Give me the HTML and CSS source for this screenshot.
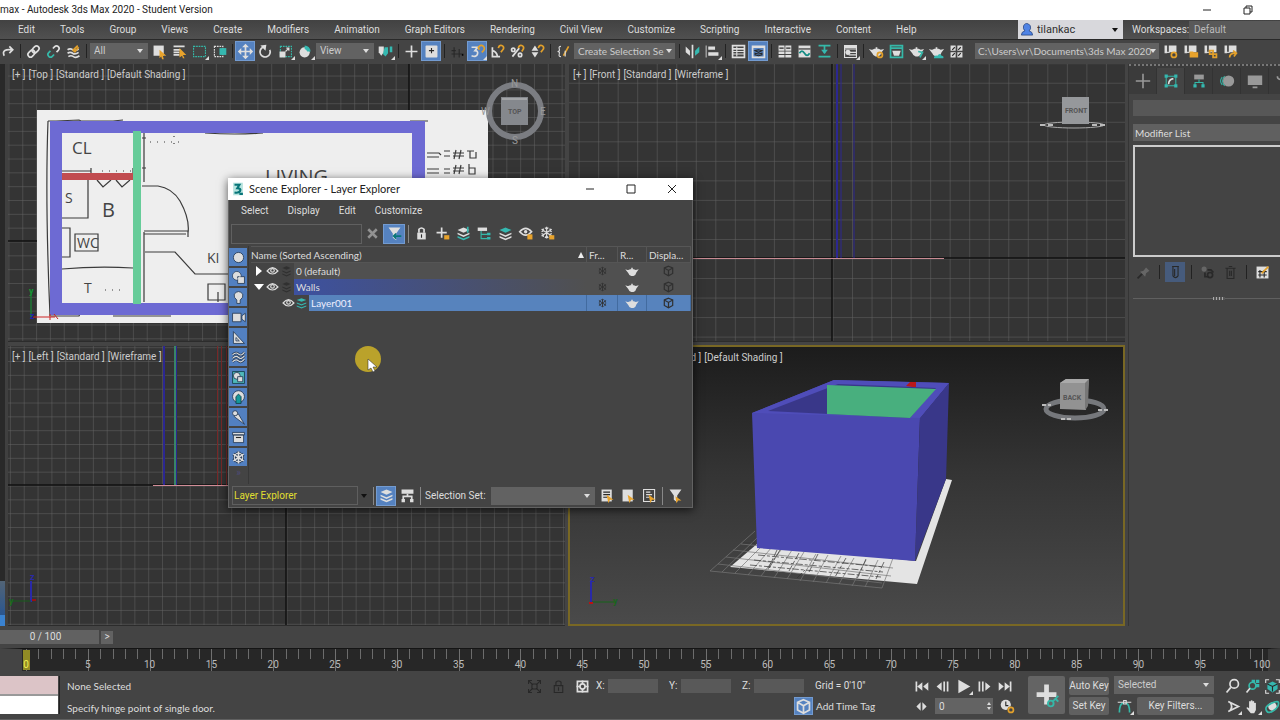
FILE: index.html
```html
<!DOCTYPE html>
<html lang="en">
<head>
<meta charset="utf-8">
<title>Autodesk 3ds Max 2020 - Student Version</title>
<link rel="stylesheet" href="styles.css">
</head>
<body>
<svg class="sprite" aria-hidden="true">
  <symbol id="redo" viewBox="0 0 20 20"><path class="s2" d="M5 15C2 9 7 7 14 8M11 4l4 4-4 4"/></symbol>
  <symbol id="link" viewBox="0 0 20 20"><g class="s2" transform="rotate(-45 10 10)"><rect x="2" y="7" width="9" height="6" rx="3"/><rect x="9" y="7" width="9" height="6" rx="3"/></g></symbol>
  <symbol id="unlink" viewBox="0 0 20 20"><g transform="rotate(-45 10 10)"><path class="t2" d="M8 7H5a3 3 0 0 0 0 6h3"/><path class="s2" d="M12 7h3a3 3 0 0 1 0 6h-3"/></g></symbol>
  <symbol id="bind" viewBox="0 0 20 20"><path class="s2" d="M3 8q3-2 6 0t7-1M3 12q3-2 6 0t7-1M4 16q3-2 6 0t7-1"/><path class="y2" d="M9 9l6-6M11 11l5-6M9 9h4"/></symbol>
  <symbol id="select" viewBox="0 0 20 20"><path class="f" d="M3 3h12v12H3z"/><path class="fy" d="M10 8l8 7-4 0 1 4-2 0-1-3-2 2z"/></symbol>
  <symbol id="byname" viewBox="0 0 20 20"><path class="s2" d="M3 4h13M3 8h8M3 11h7M3 14h7"/><path class="fy" d="M10 6l8 8-4 0 2 4-2 0-1-3-3 2z"/></symbol>
  <symbol id="region" viewBox="0 0 20 20"><path class="t1" stroke-dasharray="2 1" d="M3 4h14v12H3z"/></symbol>
  <symbol id="window" viewBox="0 0 20 20"><path class="s1" stroke-dasharray="2 1" d="M4 4h10v12H4z"/><path class="ft" d="M10 6h8v8h-8z"/></symbol>
  <symbol id="move" viewBox="0 0 20 20"><path class="s2" d="M10 3v14M3 10h14"/><path class="f" d="M10 1l4 4H6zM10 19l4-4H6zM1 10l4-4v8zM19 10l-4-4v8z"/></symbol>
  <symbol id="rotate" viewBox="0 0 20 20"><path class="s2" d="M7 5a6 6 0 1 0 8 3"/><path class="f" d="M4 3l7-1-1 7z"/></symbol>
  <symbol id="scale" viewBox="0 0 20 20"><path class="t1" stroke-dasharray="2 1" d="M4 4h13v12H4z"/><path class="f" d="M3 10h7v7H3z"/><path class="s1" d="M10 10l4-4M11 6h3v3"/></symbol>
  <symbol id="place" viewBox="0 0 20 20"><circle class="f" cx="9" cy="11" r="6"/><path class="ft" d="M9 3a7 7 0 0 1 7 7l-4 0a4 4 0 0 0-3-3z"/></symbol>
  <symbol id="pivot" viewBox="0 0 20 20"><path class="f" d="M2 4h6v7l-3 4-3-4z"/><path class="ft" d="M9 5h4v7l-3 4-3-3zM15 4h3v7h-3z"/></symbol>
  <symbol id="manip" viewBox="0 0 20 20"><path class="s2" d="M10 3v14M3 10h14"/></symbol>
  <symbol id="keyb" viewBox="0 0 20 20"><rect class="f" x="3" y="3" width="14" height="14" rx="1"/><path class="k1" d="M10 6v6M7 9h6"/></symbol>
  <symbol id="snap2" viewBox="0 0 20 20"><path class="k1" d="M3 13h14M6 5v12M12 7v10M3 9h5"/><circle cx="16" cy="14" r="1"/></symbol>
  <symbol id="snap3" viewBox="0 0 20 20"><path class="s2" d="M3 5h7L7 9q4 0 3 4t-7 2"/><path class="y2" d="M12 8l-1-3q3-4 6-1t-2 7"/></symbol>
  <symbol id="snapa" viewBox="0 0 20 20"><path class="s2" d="M4 5v11h9M4 9q5 1 6 7"/><path class="y2" d="M11 6q1-4 4-3t2 4l-3 4"/></symbol>
  <symbol id="snapp" viewBox="0 0 20 20"><path class="s2" d="M12 6L4 16"/><circle class="s2" cx="5" cy="8" r="2"/><circle class="s2" cx="13" cy="14" r="2"/><path class="y2" d="M11 6q1-4 4-3t2 4l-2 3"/></symbol>
  <symbol id="snaps" viewBox="0 0 20 20"><path class="f" d="M7 3l4 6H3zM7 17l4-6H3z"/><path class="y2" d="M11 6q1-4 4-3t2 4l-3 4"/></symbol>
  <symbol id="sets" viewBox="0 0 20 20"><path class="s1" d="M7 4q-3 0-2 3t-2 3q3 0 2 3t2 3"/><path class="y2" d="M10 15l6-11"/><path class="s1" d="M12 9v7"/></symbol>
  <symbol id="mirror" viewBox="0 0 20 20"><path class="f" d="M2 4l5 5v6l-5-4zM9 2h2v16H9z"/><path class="ft" d="M18 4l-5 5v6l5-4z"/></symbol>
  <symbol id="align" viewBox="0 0 20 20"><path class="f" d="M2 3h1v14H2zM5 4h8v4H5zM5 11h12v4H5z"/></symbol>
  <symbol id="list" viewBox="0 0 20 20"><path class="s2" d="M3 3h14v14H3zM3 7h14"/><path class="s1" d="M3 10h14M3 13h14M8 4v12"/></symbol>
  <symbol id="layerx" viewBox="0 0 20 20"><path class="s2" d="M3 4h14v13H3zM3 5h14"/><path class="k1" fill="#282828" d="M6 9l4-1 4 1-4 2zM6 12l4 1 4-1v2l-4 1-4-1z"/></symbol>
  <symbol id="ribbon" viewBox="0 0 20 20"><path class="f" d="M3 3h7v6H3zM11 3h7v6h-7zM3 10h7v3H3zM11 10h7v3h-7zM3 14h7v3H3zM11 14h7v3h-7z"/><path class="k1" d="M4 6h5M12 6h5"/></symbol>
  <symbol id="curve" viewBox="0 0 20 20"><path class="f" d="M3 3h14v14H3z"/><path class="k1" d="M3 7h14"/><path stroke="#138b83" stroke-width="2" fill="none" d="M4 12q3-5 6 0t6 0"/></symbol>
  <symbol id="schem" viewBox="0 0 20 20"><path class="t2" d="M3 3h14M3 16h14M10 4v8"/><path class="ft" d="M6 8h8l-4 5z"/></symbol>
  <symbol id="mat" viewBox="0 0 20 20"><path class="s1" d="M3 3h14v14H3zM3 7h14M8 11h9M8 14h9"/><path class="f" d="M3 3h14v3H3z"/><circle class="f" cx="7" cy="11" r="3"/></symbol>
  <symbol id="tea" viewBox="0 0 20 20"><path class="f" d="M5 8q5-3 10 0l4-1-3 4q-1 4-4 5H9Q6 15 5 12L1 7l3 1zM9 5h2v2H9z"/></symbol>
  <symbol id="rset" viewBox="0 0 20 20"><use href="#tea"/><circle class="y2" cx="14" cy="14" r="3"/></symbol>
  <symbol id="rwin" viewBox="0 0 20 20"><path class="t2" d="M3 3h14v14H3zM3 6h14"/><path class="f" d="M5 9h10l-2 6H7z"/></symbol>
  <symbol id="rprod" viewBox="0 0 20 20"><use href="#tea"/><path class="t2" d="M12 10l5 1-3 6"/></symbol>
  <symbol id="rcloud" viewBox="0 0 20 20"><use href="#tea"/><path class="ft" d="M7 18q0-4 4-3 3-4 5 0 3 0 2 3z"/></symbol>
  <symbol id="rgal" viewBox="0 0 20 20"><path class="f" d="M3 3h6v6H3zM11 3h6v6h-6zM3 11h6v6H3zM11 11h6v6h-6z"/><path class="k1" d="M5 8l3-3M12 8l3-3M5 15l3-3M12 15l3-3"/></symbol>
  <symbol id="proj" viewBox="0 0 20 20"><path class="f" d="M3 3h3v9H3zM8 3h9v8H8z"/><path class="s1" d="M4 11h5"/></symbol>
  <symbol id="p1" viewBox="0 0 20 20"><use href="#proj"/><circle class="y2" cx="14" cy="14" r="3"/></symbol>
  <symbol id="p2" viewBox="0 0 20 20"><use href="#proj"/><path class="fy" d="M9 10h4l1 1h5v6H9z"/></symbol>
  <symbol id="p3" viewBox="0 0 20 20"><use href="#proj"/><path class="y2" d="M9 9h4v4H9zM13 13h4v4h-4z"/></symbol>
  <symbol id="p4" viewBox="0 0 20 20"><use href="#proj"/><path class="y2" d="M9 17q0-5 7-5M13 9l4 3-3 4"/></symbol>
  <symbol id="plus" viewBox="0 0 20 20"><path class="g2" d="M10 1v18M1 10h18"/></symbol>
  <symbol id="modify" viewBox="0 0 20 20"><path class="t1" d="M4 4h12v12H4z"/><path class="ft" d="M2 2h4v4H2zM14 2h4v4h-4zM2 14h4v4H2zM14 14h4v4h-4z"/><path class="s2" d="M7 14q0-6 6-7"/></symbol>
  <symbol id="hier" viewBox="0 0 20 20"><path class="g" d="M4 2h12v6H4z"/><path class="t1" d="M10 8v4M5 16v-4h10v4"/><path class="ft" d="M3 14h4v4H3zM13 14h4v4h-4z"/></symbol>
  <symbol id="motion" viewBox="0 0 20 20"><path class="t1" d="M7 4q-5 6 0 12M4 5q-4 5 0 10"/><circle class="g" cx="12" cy="10" r="7"/></symbol>
  <symbol id="display" viewBox="0 0 20 20"><path class="g" d="M1 3h18v12H1zM7 17h6v2H7z"/></symbol>
  <symbol id="util" viewBox="0 0 20 20"><path class="g2" d="M3 4q0 4 4 4l9 9M7 3l1 4"/></symbol>
  <symbol id="pin" viewBox="0 0 20 20"><path class="d2" d="M3 17l6-6"/><path class="d" d="M6 9l4-1 3-4 4 4-4 3-1 4z"/></symbol>
  <symbol id="tube" viewBox="0 0 20 20"><path class="k1" d="M6 3h8M7 3v11q3 4 6 0V3M9 6v8"/></symbol>
  <symbol id="unique" viewBox="0 0 20 20"><circle class="d" cx="6" cy="6" r="3"/><path class="d2" d="M10 7h4l3 3M7 10v5h4"/><circle class="d2" cx="13" cy="13" r="3"/></symbol>
  <symbol id="trash" viewBox="0 0 20 20"><path class="d1" d="M4 5h12M6 5v12h8V5M8 3h4M9 8v6M11 8v6"/></symbol>
  <symbol id="config" viewBox="0 0 20 20"><path class="f" d="M3 3h14v14H3z"/><path class="k1" d="M5 9h10M5 13h10M7 7v9M12 7v9"/><path class="y2" d="M9 11l8-8"/></symbol>
  <symbol id="max" viewBox="0 0 20 20"><path fill="#b8e4df" d="M3 1h14v18H3z"/><path stroke="#087579" stroke-width="3" fill="none" d="M5 4h7l-3 5q6 0 4 4-2 3-8 2M12 17h5"/></symbol>
  <symbol id="filter" viewBox="0 0 20 20"><path class="f" d="M3 3h14l-5 7v8l-4-3v-5z"/></symbol>
  <symbol id="filtera" viewBox="0 0 20 20"><use href="#filter"/><path stroke="#087579" stroke-width="2" fill="none" d="M9 13h9M12 10l-3 3 3 3"/></symbol>
  <symbol id="filterb" viewBox="0 0 20 20"><use href="#filter"/><path class="fy" d="M10 11l7 5h-4l-2 3z"/></symbol>
  <symbol id="lock" viewBox="0 0 20 20"><path class="f" d="M5 9h10v8H5z"/><path class="s2" d="M7 9V5q3-3 6 0v4"/><path class="k1" d="M10 11v4"/></symbol>
  <symbol id="lockd" viewBox="0 0 20 20"><path class="k1" d="M5 9h10v8H5zM7 9V5q3-3 6 0v4M10 11v4"/></symbol>
  <symbol id="addl" viewBox="0 0 20 20"><path class="s2" d="M9 3v12M3 9h12"/><path class="fy" d="M12 12h6v5h-6z"/></symbol>
  <symbol id="layers" viewBox="0 0 20 20"><path class="f" d="M3 6l7-3 7 3-7 3zM3 9l7 3 7-3v2l-7 3-7-3zM3 13l7 3 7-3v2l-7 3-7-3z"/></symbol>
  <symbol id="layadd" viewBox="0 0 20 20"><path class="f" d="M3 6l7-3 7 3-7 3z"/><path class="ft" d="M3 13l7 3 7-3v2l-7 3-7-3zM14 2h2v7h-2z"/><path class="f" d="M3 9l7 3 7-3v2l-7 3-7-3z"/></symbol>
  <symbol id="layt" viewBox="0 0 20 20"><path class="ft" d="M3 6l7-3 7 3-7 3z"/><path class="f" d="M3 9l7 3 7-3v2l-7 3-7-3zM3 13l7 3 7-3v2l-7 3-7-3z"/></symbol>
  <symbol id="layall" viewBox="0 0 20 20"><path class="ft" d="M2 5l8-3 8 3-8 3zM2 9l8 3 8-3v2l-8 3-8-3zM2 14l8 3 8-3v2l-8 3-8-3z"/></symbol>
  <symbol id="laydim" viewBox="0 0 20 20"><path fill="#303030" d="M3 5l7-3 7 3-7 3zM3 9l7 3 7-3v2l-7 3-7-3zM3 14l7 3 7-3v2l-7 3-7-3z"/></symbol>
  <symbol id="tree" viewBox="0 0 20 20"><path class="f" d="M2 3h11v4H2z"/><path class="t1" d="M6 7v9h7M6 11h7"/><path class="ft" d="M13 9h4v3h-4zM13 14h4v3h-4z"/></symbol>
  <symbol id="eye" viewBox="0 0 20 20"><path class="s2" d="M1 10q9-11 18 0-9 10-18 0z"/><circle class="s2" cx="10" cy="9" r="3"/></symbol>
  <symbol id="eyel" viewBox="0 0 20 20"><path class="s2" d="M2 8q7-8 14 0-7 8-14 0z"/><circle class="f" cx="9" cy="8" r="2"/><path class="fy" d="M11 11h6v6h-6z"/></symbol>
  <symbol id="snow" viewBox="0 0 20 20"><path d="M10 3v14M4 6l12 8M16 6L4 14M8 4l2 2 2-2M8 16l2-2 2 2M4 9l2-1V5M16 9l-2-1V5M4 11l2 1v3M16 11l-2 1v3" fill="none" stroke="currentColor" stroke-width="1.4"/></symbol>
  <symbol id="snowl" viewBox="0 0 20 20"><use href="#snow" x="-1" y="-1"/><path class="fy" d="M12 12h6v5h-6z"/></symbol>
  <symbol id="cube" viewBox="0 0 20 20"><path d="M10 2l7 3v9l-7 4-7-4V5zM3 5l7 4 7-4M10 9v9" fill="none" stroke="currentColor" stroke-width="2"/></symbol>
  <symbol id="geo" viewBox="0 0 20 20"><circle class="o" cx="10" cy="10" r="6"/></symbol>
  <symbol id="shapes" viewBox="0 0 20 20"><circle class="o" cx="8" cy="8" r="5"/><path class="o" d="M9 9h8v8H9z"/><circle cx="8" cy="8" r="4" fill="none" stroke="#ddd"/></symbol>
  <symbol id="bulb" viewBox="0 0 20 20"><path class="o" d="M8 13q-4-3-3-7 5-6 10 0 1 4-3 7v4H8z"/></symbol>
  <symbol id="cam" viewBox="0 0 20 20"><path class="o" d="M3 5h10v10H3zM14 8l4-3v10l-4-3z"/></symbol>
  <symbol id="help" viewBox="0 0 20 20"><path class="o" d="M4 3l13 14H4zM7 10l4 4H7z"/></symbol>
  <symbol id="wave" viewBox="0 0 20 20"><path class="w3" d="M3 7q4-4 7-1t7-2M3 11q4-4 7-1t7-2M3 15q4-4 7-1t7-2"/><path class="s1" d="M3 7q4-4 7-1t7-2M3 11q4-4 7-1t7-2M3 15q4-4 7-1t7-2"/></symbol>
  <symbol id="grp" viewBox="0 0 20 20"><path stroke="#143f49" fill="#4fb9b9" d="M3 3h14v14H3z"/><circle class="o" cx="8" cy="8" r="4"/><path class="o" d="M9 9h6v6H9z"/></symbol>
  <symbol id="xref" viewBox="0 0 20 20"><circle class="o" cx="10" cy="9" r="7"/><path fill="#15999a" stroke="#143f49" d="M7 17V9l3-3 3 3v8z"/></symbol>
  <symbol id="bone" viewBox="0 0 20 20"><path class="o" d="M6 7l4-1 7 12L5 9z"/><circle class="o" cx="6" cy="5" r="3"/></symbol>
  <symbol id="box" viewBox="0 0 20 20"><path class="o" d="M4 7h12v9H4zM3 4h14v3H3z"/><path class="k1" d="M7 10h6"/></symbol>
  <symbol id="frz" viewBox="0 0 20 20"><path stroke="#263b57" stroke-width="4" d="M10 3v14M4 6l12 8M16 6L4 14"/><circle class="w3" cx="10" cy="10" r="5"/><path class="s2" d="M10 3v14M4 6l12 8M16 6L4 14"/><circle class="s1" cx="10" cy="10" r="5"/></symbol>
  <symbol id="hmode" viewBox="0 0 20 20"><path class="f" d="M3 3h14v5H3zM3 14h4v4H3zM13 14h4v4h-4z"/><path class="s2" d="M5 14v-3h10v3M10 8v3"/></symbol>
  <symbol id="doc" viewBox="0 0 20 20"><path class="f" d="M3 3h12v14H3z"/><path class="k1" d="M5 6h8M5 9h8M5 12h5"/><path class="fy" d="M9 9l8 6h-4l-2 4z"/></symbol>
  <symbol id="doc2" viewBox="0 0 20 20"><path class="f" d="M3 3h12v14H3z"/><path class="fy" d="M9 9l8 6h-4l-2 4z"/></symbol>
  <symbol id="doc3" viewBox="0 0 20 20"><path class="s1" d="M3 3h13v14H3z"/><path class="s1" d="M6 6h5M6 9h7M6 12h4"/><path class="fy" d="M9 9l8 6h-4l-2 4z"/></symbol>
  <symbol id="user" viewBox="0 0 20 20"><path fill="#4f83e5" stroke="#1b3975" d="M2 18q0-5 5-6-3-3-2-7 2-5 7-3 4 2 3 7l-2 3q5 1 5 6z"/></symbol>
  <symbol id="iso" viewBox="0 0 20 20"><path class="k1" d="M3 7V3h4M13 3h4v4M3 13v4h4M13 17h4v-4M7 7h6v6H7zM3 3l5 5M17 3l-5 5M3 17l5-5M17 17l-5-5"/></symbol>
  <symbol id="abs" viewBox="0 0 20 20"><path class="s2" d="M4 4h12v12H4z"/><circle class="s2" cx="10" cy="10" r="3"/><path class="s2" d="M10 3v4M10 13v4M3 10h4M13 10h4"/></symbol>
  <symbol id="first" viewBox="0 0 20 20"><path class="f" d="M3 4h2v12H3zM11 5v10l-6-5zM18 5v10l-6-5z"/></symbol>
  <symbol id="last" viewBox="0 0 20 20"><path class="f" d="M15 4h2v12h-2zM9 5v10l6-5zM2 5v10l6-5z"/></symbol>
  <symbol id="prev" viewBox="0 0 20 20"><path class="f" d="M9 5v10l-6-5zM11 4h2v12h-2zM15 4h2v12h-2z"/></symbol>
  <symbol id="next" viewBox="0 0 20 20"><path class="f" d="M11 5v10l6-5zM7 4h2v12H7zM3 4h2v12H3z"/></symbol>
  <symbol id="play" viewBox="0 0 20 20"><path class="f" d="M4 2l14 8-14 8z"/></symbol>
  <symbol id="kmode" viewBox="0 0 20 20"><path class="f" d="M9 5v10l-5-5zM11 5v10l5-5z"/></symbol>
  <symbol id="time" viewBox="0 0 20 20"><circle class="f" cx="8" cy="8" r="6"/><path class="k1" d="M8 4v5h3"/><circle cx="14" cy="14" r="4" fill="#444"/><circle class="y2" cx="14" cy="14" r="3"/></symbol>
  <symbol id="setkey" viewBox="0 0 36 36"><path class="f" d="M15 7h5v8h8v5h-8v8h-5v-8H7v-5h8z"/><circle class="t2" cx="22" cy="27" r="3"/><path class="t2" d="M24 25l6-6M27 22l3 3"/></symbol>
  <symbol id="tang" viewBox="0 0 20 20"><path class="t2" d="M4 17q0-11 5-11M16 17q0-11-5-11"/><path class="s1" d="M2 5h16M9 3h3v4H9z"/></symbol>
  <symbol id="mag" viewBox="0 0 20 20"><circle class="s2" cx="12" cy="7" r="5"/><path class="s2" d="M8 11l-5 6"/></symbol>
  <symbol id="magall" viewBox="0 0 20 20"><path class="ft" d="M9 2h4v4H9zM14 2h4v4h-4zM14 7h4v4h-4z"/><circle class="t2" cx="10" cy="9" r="4"/><path class="s2" d="M7 12l-4 5"/></symbol>
  <symbol id="ext" viewBox="0 0 20 20"><path class="s1" d="M2 6V2h4M14 2h4v4M2 14v4h4M14 18h4v-4"/><path class="ft" d="M10 4l6 3v6l-6 4-6-4V7z"/><path class="k1" d="M4 7l6 3 6-3M10 10v6"/></symbol>
  <symbol id="fov" viewBox="0 0 20 20"><path class="s2" d="M5 4l12 6-12 6M7 5q4 5 0 10"/></symbol>
  <symbol id="hand" viewBox="0 0 20 20"><path class="f" d="M6 10V4q1-1 2 0v4-5q1-1 2 0v5-4q1-1 2 0v5-3q1-1 2 0v8l-2 4H8L3 12q0-2 3 0z"/></symbol>
  <symbol id="orbit" viewBox="0 0 20 20"><circle class="f" cx="10" cy="10" r="5"/><path class="t2" d="M3 15q-3-5 6-9t8 1q0 4-6 8t-8 0"/></symbol>
</svg>

<div class="app">
  <header class="titlebar">
    <h1>max - Autodesk 3ds Max 2020 - Student Version</h1>
    <div class="winbtns">
      <button aria-label="Minimize"><svg viewBox="0 0 12 12"><path d="M2 6h8"/></svg></button>
      <button aria-label="Restore"><svg viewBox="0 0 12 12"><path d="M2 4h6v6H2zM4 4V2h6v6H8"/></svg></button>
    </div>
  </header>

  <nav class="menubar">
    <div class="menus">
      <button>Edit</button><button>Tools</button><button>Group</button><button>Views</button><button>Create</button><button>Modifiers</button><button>Animation</button><button>Graph Editors</button><button>Rendering</button><button>Civil View</button><button>Customize</button><button>Scripting</button><button>Interactive</button><button>Content</button><button>Help</button>
    </div>
    <span class="account"><svg class="ic"><use href="#user"/></svg><select aria-label="Account"><option>tilankac</option></select></span>
    <label class="workspace"><span>Workspaces:</span><select><option>Default</option></select></label>
  </nav>

  <div class="toolbar">
    <button class="tb edge" aria-label="Redo"><svg><use href="#redo"/></svg></button><i class="sep"></i>
    <button class="tb" aria-label="Link"><svg><use href="#link"/></svg></button>
    <button class="tb" aria-label="Unlink"><svg><use href="#unlink"/></svg></button>
    <button class="tb" aria-label="Bind"><svg><use href="#bind"/></svg></button><i class="sep"></i>
    <span class="drop w-s"><select aria-label="Selection filter"><option>All</option></select></span>
    <button class="tb" aria-label="Select"><svg><use href="#select"/></svg></button>
    <button class="tb" aria-label="Select by name"><svg><use href="#byname"/></svg></button>
    <button class="tb fly" aria-label="Region"><svg><use href="#region"/></svg></button>
    <button class="tb" aria-label="Window crossing"><svg><use href="#window"/></svg></button><i class="sep"></i>
    <button class="tb on" aria-label="Move"><svg><use href="#move"/></svg></button>
    <button class="tb" aria-label="Rotate"><svg><use href="#rotate"/></svg></button>
    <button class="tb fly" aria-label="Scale"><svg><use href="#scale"/></svg></button>
    <button class="tb fly" aria-label="Place"><svg><use href="#place"/></svg></button>
    <span class="drop w-s"><select aria-label="Coordinate system"><option>View</option></select></span>
    <button class="tb fly" aria-label="Pivot"><svg><use href="#pivot"/></svg></button><i class="sep"></i>
    <button class="tb" aria-label="Manipulate"><svg><use href="#manip"/></svg></button>
    <button class="tb on" aria-label="Keyboard override"><svg><use href="#keyb"/></svg></button><i class="sep"></i>
    <button class="tb" aria-label="Grid snap"><svg><use href="#snap2"/></svg></button>
    <button class="tb on fly" aria-label="3D snap"><svg><use href="#snap3"/></svg></button>
    <button class="tb" aria-label="Angle snap"><svg><use href="#snapa"/></svg></button>
    <button class="tb" aria-label="Percent snap"><svg><use href="#snapp"/></svg></button>
    <button class="tb" aria-label="Spinner snap"><svg><use href="#snaps"/></svg></button><i class="sep"></i>
    <button class="tb" aria-label="Edit selection sets"><svg><use href="#sets"/></svg></button>
    <span class="drop w-m"><select aria-label="Selection set"><option>Create Selection Se</option></select></span><i class="sep"></i>
    <button class="tb" aria-label="Mirror"><svg><use href="#mirror"/></svg></button>
    <button class="tb fly" aria-label="Align"><svg><use href="#align"/></svg></button><i class="sep"></i>
    <button class="tb" aria-label="Scene explorer"><svg><use href="#list"/></svg></button>
    <button class="tb on" aria-label="Layer explorer"><svg><use href="#layerx"/></svg></button><i class="sep"></i>
    <button class="tb" aria-label="Ribbon"><svg><use href="#ribbon"/></svg></button>
    <button class="tb" aria-label="Curve editor"><svg><use href="#curve"/></svg></button>
    <button class="tb" aria-label="Schematic view"><svg><use href="#schem"/></svg></button><i class="sep"></i>
    <button class="tb fly" aria-label="Material editor"><svg><use href="#mat"/></svg></button><i class="sep"></i>
    <button class="tb" aria-label="Render setup"><svg><use href="#rset"/></svg></button>
    <button class="tb" aria-label="Frame window"><svg><use href="#rwin"/></svg></button>
    <button class="tb fly" aria-label="Render"><svg><use href="#rprod"/></svg></button>
    <button class="tb" aria-label="Cloud render"><svg><use href="#rcloud"/></svg></button>
    <button class="tb" aria-label="Gallery"><svg><use href="#rgal"/></svg></button><i class="grip"></i>
    <span class="drop w-l"><select aria-label="Project folder"><option>C:\Users\vr\Documents\3ds Max 2020</option></select></span>
    <button class="tb" aria-label="Project"><svg><use href="#p1"/></svg></button>
    <button class="tb" aria-label="Open folder"><svg><use href="#p2"/></svg></button>
    <button class="tb" aria-label="Project tree"><svg><use href="#p3"/></svg></button>
    <button class="tb" aria-label="Project defaults"><svg><use href="#p4"/></svg></button>
  </div>

  <main class="work">
    <div class="rail"></div>
    <div class="views">
      <section class="view">
        <svg viewBox="8 64 557 278" preserveAspectRatio="xMinYMin slice">
          <defs>
            <pattern id="gt" x="409.5" y="241.5" width="13.83" height="13.83" patternUnits="userSpaceOnUse"><path d="M0 0H14M0 0V14" class="grid"/></pattern>
          </defs>
          <path fill="url(#gt)" d="M8 64h557v278H8z"/>
          <path class="axis" d="M409 64v278M8 241h557"/>
          <path fill="#eee" d="M37 110h451v213H37z"/>
          <path class="ink" d="M48 121h8l23-1 2 1h32l10-1M48 121q-3 80 2 195M51 316h28l1-2M113 316h58M205 133q30 2 58 0M410 121h18M144 132v50M142 138h4M142 168h4M142 186h16q14 2 22 15 10 18 8 32M144 231h44v6M144 234h42M144 232v70M145 252h30l20 22h33M62 171h29v-3M91 168v6M133 168v6M97 180l6 7 8-7M116 180l6 7 8-7M88 180v38H61M62 228h8v29h-8M75 234h23v17H75zM62 269q35-3 71-1M208 284h17v16h-17zM218 292v10M427 153h12l2 2M427 157h12M427 169h12M427 173h12M444 151h6M444 156h6M456 150l-2 9M461 150l-2 9M453 153h11M453 156h11M467 151h7M470 151v7h6v-6M444 169h6M444 173h6M456 165l-2 9M461 165l-2 9M453 168h11M453 171h11M469 164v10h6v-6h-6"/>
          <path class="ink" stroke-dasharray="1 6" d="M150 142h30M174 136v11M102 171h30M105 290h20"/>
          <g class="hand"><text x="72" y="154">CL</text><text x="65" y="203" class="sm">S</text><text x="102" y="217" class="lg">B</text><text x="77" y="248" class="sm">WC</text><text x="84" y="293" class="sm">T</text><text x="207" y="263" class="sm">KI</text><text x="265" y="184" class="lg">LIVING</text></g>
          <path fill="#6d6ad3" fill-rule="evenodd" d="M50 121h375v194H50zM62 133v170h350V133z"/>
          <path fill="#c14c50" d="M62 173h72v7H62z"/><path fill="#66cc99" d="M133 131h8v173h-8z"/>
          <path stroke="#193" d="M31 294v23" /><path stroke="#c22" d="M33 317h22M50 314v6M54 314l4 5"/>
          <text class="ax" fill="#193" x="29" y="294">y</text><text class="ax" fill="#22a" x="30" y="319">z</text>
          <g><circle cx="515" cy="111" r="26" fill="none" stroke="#7b7d82" stroke-width="6"/><path fill="#85888d" d="M501 97h27v28h-27z"/><path fill="#a3a5a8" d="M502 98h25v2h-25z"/><text x="508" y="114" class="tiny">TOP</text><g class="compass"><text x="511" y="87">N</text><text x="540" y="115">E</text><text x="512" y="144">S</text><text x="481" y="115">W</text></g></g>
        </svg>
        <p class="vlabel"><button>[+ ]</button><button>[Top ]</button><button>[Standard ]</button><button>[Default Shading ]</button></p>
      </section>
      <section class="view">
        <svg viewBox="569 64 556 278" preserveAspectRatio="xMinYMin slice">
          <defs><pattern id="gf" x="832.5" y="258.5" width="19.53" height="19.53" patternUnits="userSpaceOnUse"><path d="M0 0H20M0 0V20" class="grid"/></pattern></defs>
          <path fill="url(#gf)" d="M569 64h556v278H569z"/>
          <path class="axis" d="M832 64v278M569 258h556"/>
          <path stroke="#2c2791" stroke-width="2" d="M837 64v194"/><path stroke="#2c2791" d="M854 64v194M841 64v194"/>
          <path stroke="#c88b93" stroke-width="1" d="M569 258.500h375"/>
          <ellipse cx="1074" cy="125" rx="30" ry="3" fill="#333" stroke="#aaa"/><path stroke="#bbb" stroke-width="2" stroke-dasharray="5 3" d="M1040 125h16M1092 125h16"/>
          <path fill="#96989b" d="M1062 97h27v27h-27z"/><text x="1065" y="113" class="tiny">FRONT</text>
        </svg>
        <p class="vlabel"><button>[+ ]</button><button>[Front ]</button><button>[Standard ]</button><button>[Wireframe ]</button></p>
      </section>
      <section class="view">
        <svg viewBox="8 346 557 280" preserveAspectRatio="xMinYMin slice">
          <defs><pattern id="gl" x="286.500" y="485.500" width="13.83" height="13.83" patternUnits="userSpaceOnUse"><path d="M0 0H14M0 0V14" class="grid"/></pattern></defs>
          <path fill="url(#gl)" d="M8 346h557v280H8z"/>
          <path class="axis" d="M286 346v280M8 485h557"/>
          <path stroke="#2c2791" stroke-width="2" d="M164 346v139M176 346v139"/><path stroke="#398468" stroke-width="2" d="M175 346v139"/>
          <path stroke="#792929" d="M217.500 346v139M221.500 346v139M226.500 346v139"/>
          <path stroke="#d18d97" d="M153 485.500h133"/>
          <path stroke="#2929a8" stroke-width="2" d="M31 581v21"/><path stroke="#175d1b" d="M12 601h19"/><path stroke="#911" stroke-width="2" d="M32 600h4"/>
          <text class="ax" fill="#2929a8" x="30" y="580">z</text><text class="ax" fill="#176d1b" x="9" y="604">y</text>
        </svg>
        <p class="vlabel"><button>[+ ]</button><button>[Left ]</button><button>[Standard ]</button><button>[Wireframe ]</button></p>
      </section>
      <section class="view persp">
        <svg viewBox="570 347 553 277" preserveAspectRatio="xMinYMin slice">
          <path fill="#e4e4e4" d="M730 567l27-23 159 17 30-82 6 1-35 104z"/>
          <path class="mesh" d="M710 571l45-40M710 571l172 17 11-30M718 564l164 19M726 557l165 19M733 550l160 18M741 544l40 4M722 572l35-34M735 573l30-30M748 575l24-28M761 576l20-26M774 578l18-28M787 579l17-27M800 581l16-27M813 582l15-27M826 583l15-27M839 584l15-26M852 586l14-26M865 587l13-27"/>
          <path class="mesh dark" stroke-dasharray="7 2 3 2" d="M758 555l126 12M754 560l129 12M750 565l131 12M780 550l-12 20M777 550l-9 19M799 553l-10 18M818 554l-9 18M846 558l-11 19M866 559l-9 20M884 562l-8 17M743 543l15 0M797 578l8-8"/>
          <path fill="#4a48b0" d="M752 413l82-33 115 3-29 35-5 143-158-13z"/>
          <path fill="#393789" d="M920 418l29-35-3 96-31 82z"/>
          <path fill="#4f4db9" d="M752 413l82-33 115 3-29 35z"/>
          <path fill="#393789" d="M768 411l70-27 98 4-26 30z"/>
          <path fill="#48af7e" d="M827 385l109 4-26 29-83-4z"/>
          <path fill="#b9181a" d="M906 386l4-4h6v5h-3z"/>
          <ellipse cx="1075" cy="409" rx="29" ry="9" fill="none" stroke="#76787c" stroke-width="5"/>
          <path fill="#929292" d="M1060 383l6-4h23l-3 31-26-1z"/><path fill="#aaa" d="M1060 383l6-4h23l-3 4z"/><path fill="#777" d="M1085 383l4-4-1 27-3 4z"/><text class="tiny" x="1063" y="400">BACK</text><path stroke="#bbb" stroke-width="2" stroke-dasharray="4 2" d="M1042 405h9M1061 419h11M1098 410h10"/>
          <path stroke="#2929a8" stroke-width="2" d="M591 581v22"/><path stroke="#17651b" d="M592 602h22"/><path stroke="#b11" stroke-width="2" d="M589 603h4"/><text class="ax" fill="#2929a8" x="590" y="582">z</text><text class="ax" fill="#17651b" x="613" y="604">y</text>
        </svg>
        <p class="vlabel"><button>[+ ]</button><button>[Perspective ]</button><button>[Standard ]</button><button>[Default Shading ]</button></p>
      </section>
    </div>

    <aside class="panel">
      <div class="tabs">
        <button aria-label="Create"><svg class="ic"><use href="#plus"/></svg></button><button class="cur" aria-label="Modify"><svg class="ic"><use href="#modify"/></svg></button><button aria-label="Hierarchy"><svg class="ic"><use href="#hier"/></svg></button><button aria-label="Motion"><svg class="ic"><use href="#motion"/></svg></button><button aria-label="Display"><svg class="ic"><use href="#display"/></svg></button><button aria-label="Utilities"><svg class="ic"><use href="#util"/></svg></button>
      </div>
      <input class="objname" type="text" aria-label="Object name">
      <select class="modlist" aria-label="Modifier List"><option>Modifier List</option></select>
      <div class="stack"></div>
      <div class="stacktools">
        <button class="tb" aria-label="Pin stack"><svg><use href="#pin"/></svg></button><i class="sep"></i><button class="tb on dim" aria-label="Show end result"><svg><use href="#tube"/></svg></button><i class="sep"></i><button class="tb" aria-label="Make unique"><svg><use href="#unique"/></svg></button><button class="tb" aria-label="Remove modifier"><svg><use href="#trash"/></svg></button><i class="sep"></i><button class="tb" aria-label="Configure sets"><svg><use href="#config"/></svg></button>
      </div>
      <div class="rollsplit"><i></i></div>
    </aside>
  </main>

  <div class="slider"><button class="frame">0 / 100</button><button class="step" aria-label="Next frame">&gt;</button></div>
  <div class="ruler"><div class="track" id="track"></div></div>

  <footer class="status">
    <div class="listener"><input aria-label="Macro recorder"><input aria-label="Script listener"></div>
    <div class="messages"><p>None Selected</p><p>Specify hinge point of single door.</p></div>
    <div class="coords">
      <div class="line">
        <button class="tb" aria-label="Isolate"><svg><use href="#iso"/></svg></button><button class="tb" aria-label="Lock selection"><svg><use href="#lockd"/></svg></button><button class="tb" aria-label="Absolute mode"><svg><use href="#abs"/></svg></button>
        <label><span>X:</span><input type="text"></label><label><span>Y:</span><input type="text"></label><label><span>Z:</span><input type="text"></label><span class="gridsize">Grid = 0'10"</span>
      </div>
      <div class="line tag"><button class="tb on" aria-label="Time tag"><svg><use href="#cube"/></svg></button><button class="plain">Add Time Tag</button></div>
    </div>
    <div class="transport">
      <div class="line"><button class="tb" aria-label="Start"><svg><use href="#first"/></svg></button><button class="tb" aria-label="Previous"><svg><use href="#prev"/></svg></button><button class="tb fly" aria-label="Play"><svg><use href="#play"/></svg></button><button class="tb" aria-label="Next"><svg><use href="#next"/></svg></button><button class="tb" aria-label="End"><svg><use href="#last"/></svg></button></div>
      <div class="line"><button class="tb" aria-label="Key mode"><svg><use href="#kmode"/></svg></button><span class="spin"><input type="text" value="0" aria-label="Frame"></span><button class="tb" aria-label="Time configuration"><svg><use href="#time"/></svg></button></div>
    </div>
    <button class="bigkey" aria-label="Set keys"><svg><use href="#setkey"/></svg></button>
    <div class="keys"><button>Auto Key</button><button>Set Key</button></div>
    <div class="filters">
      <span class="drop"><select aria-label="Key target"><option>Selected</option></select></span>
      <div class="line"><button class="tb fly" aria-label="Tangents"><svg><use href="#tang"/></svg></button><button class="kf">Key Filters...</button></div>
    </div>
    <div class="navs">
      <button class="tb" aria-label="Zoom"><svg><use href="#mag"/></svg></button><button class="tb" aria-label="Zoom all"><svg><use href="#magall"/></svg></button><button class="tb" aria-label="Zoom extents"><svg><use href="#ext"/></svg></button>
      <button class="tb fly" aria-label="Field of view"><svg><use href="#fov"/></svg></button><button class="tb fly" aria-label="Pan"><svg><use href="#hand"/></svg></button><button class="tb" aria-label="Orbit"><svg><use href="#orbit"/></svg></button>
    </div>
  </footer>

  <section class="dialog" role="dialog" aria-labelledby="dlgt">
    <header class="dtitle"><svg class="ic"><use href="#max"/></svg><h2 id="dlgt">Scene Explorer - Layer Explorer</h2>
      <div class="winbtns"><button aria-label="Minimize"><svg viewBox="0 0 12 12"><path d="M2 6h8"/></svg></button><button aria-label="Maximize"><svg viewBox="0 0 12 12"><path d="M2 2h8v8H2z"/></svg></button><button aria-label="Close"><svg viewBox="0 0 12 12"><path d="M2 2l8 8M10 2l-8 8"/></svg></button></div>
    </header>
    <nav class="dmenu"><button>Select</button><button>Display</button><button>Edit</button><button>Customize</button></nav>
    <div class="dtools">
      <input type="text" aria-label="Find"><button class="tb clear" aria-label="Clear"><svg viewBox="0 0 20 20"><path d="M5 5l10 10M15 5L5 15" stroke="#929292" stroke-width="3"/></svg></button>
      <button class="tb on wide" aria-label="Filter"><svg><use href="#filtera"/></svg></button><i class="sep light"></i>
      <button class="tb" aria-label="Lock"><svg><use href="#lock"/></svg></button><button class="tb" aria-label="New layer"><svg><use href="#addl"/></svg></button><button class="tb" aria-label="Add to layer"><svg><use href="#layadd"/></svg></button><button class="tb" aria-label="Select children"><svg><use href="#tree"/></svg></button><button class="tb" aria-label="Make active"><svg><use href="#layt"/></svg></button><button class="tb" aria-label="Hide"><svg><use href="#eyel"/></svg></button><button class="tb" aria-label="Freeze"><svg><use href="#snowl"/></svg></button>
    </div>
    <div class="dbody">
      <div class="kinds">
        <button aria-label="Geometry"><svg><use href="#geo"/></svg></button><button aria-label="Shapes"><svg><use href="#shapes"/></svg></button><button aria-label="Lights"><svg><use href="#bulb"/></svg></button><button aria-label="Cameras"><svg><use href="#cam"/></svg></button><button aria-label="Helpers"><svg><use href="#help"/></svg></button><button aria-label="Space warps"><svg><use href="#wave"/></svg></button><button aria-label="Groups"><svg><use href="#grp"/></svg></button><button aria-label="XRefs"><svg><use href="#xref"/></svg></button><button aria-label="Bones"><svg><use href="#bone"/></svg></button><button aria-label="Containers"><svg><use href="#box"/></svg></button><button aria-label="Frozen"><svg><use href="#frz"/></svg></button><span>»</span>
      </div>
      <div class="tablewrap">
        <table>
          <colgroup><col><col class="c1"><col class="c2"><col class="c3"></colgroup>
          <thead><tr><th><div class="sort"><span>Name (Sorted Ascending)</span><i></i></div></th><th>Fr...</th><th>R...</th><th>Displa...</th></tr></thead>
          <tbody>
            <tr class="r0"><td><div class="node"><i class="closed"></i><svg><use href="#eye"/></svg><svg><use href="#laydim"/></svg><span>0 (default)</span></div></td><td><svg><use href="#snow"/></svg></td><td><svg class="pot"><use href="#tea"/></svg></td><td><svg><use href="#cube"/></svg></td></tr>
            <tr class="r1"><td><div class="node"><i class="open"></i><svg><use href="#eye"/></svg><svg><use href="#laydim"/></svg><span>Walls</span></div></td><td><svg><use href="#snow"/></svg></td><td><svg class="pot"><use href="#tea"/></svg></td><td><svg><use href="#cube"/></svg></td></tr>
            <tr class="r2"><td><div class="node child"><svg><use href="#eye"/></svg><svg><use href="#layall"/></svg><span>Layer001</span></div></td><td><svg><use href="#snow"/></svg></td><td><svg class="pot"><use href="#tea"/></svg></td><td><svg><use href="#cube"/></svg></td></tr>
          </tbody>
        </table>
      </div>
    </div>
    <div class="dfoot">
      <span class="explorer"><select aria-label="Explorer"><option>Layer Explorer</option></select></span><i class="sep light"></i>
      <button class="tb on" aria-label="Sort by layer"><svg><use href="#layers"/></svg></button><button class="tb" aria-label="Sort by hierarchy"><svg><use href="#hmode"/></svg></button><i class="sep light"></i>
      <label for="sset">Selection Set:</label><span class="drop sset"><select id="sset"><option></option></select></span>
      <button class="tb" aria-label="Select list"><svg><use href="#doc"/></svg></button><button class="tb" aria-label="Select none"><svg><use href="#doc2"/></svg></button><button class="tb" aria-label="Select invert"><svg><use href="#doc3"/></svg></button><i class="sep light"></i><button class="tb" aria-label="Filter set"><svg><use href="#filterb"/></svg></button>
    </div>
    <svg class="pointer" viewBox="0 0 30 30"><circle cx="13" cy="13" r="13" fill="#baa22b"/><path fill="#fff" stroke="#222" stroke-width=".5" d="M13 13v11l3-2 2 4 2-1-2-4h4z"/></svg>
  </section>
</div>
<script src="ruler.js"></script>
</body>
</html>
```
FILE: ruler.js
```
const track = document.getElementById('track');
for (let f = 0; f <= 100; f++) {
  const tick = document.createElement('i');
  if (f % 5 === 0) {
    tick.className = 'major';
    const n = document.createElement('span');
    n.textContent = f;
    tick.append(n);
  }
  if (f === 0) tick.classList.add('now');
  track.append(tick);
}
```
FILE: styles.css
```css
* { box-sizing: border-box; }
body { margin: 0; background: #444; color: #ddd; font: 10px/14px Roboto, "Noto Sans", sans-serif; }
button, input, select { font: inherit; color: inherit; border: 0; margin: 0; padding: 0; background: none; border-radius: 0; min-width: 0; }
select { appearance: none; width: 100%; }
p, h1, h2 { margin: 0; font: inherit; }
svg { display: block; }
.sprite { position: absolute; width: 0; height: 0; }
.f { fill: #dedede; } .ft { fill: #35b8b0; } .fy { fill: #e8a32c; } .g { fill: #999; } .d { fill: #666; }
.s1, .s2, .t1, .t2, .y1, .y2, .g2, .k1, .d1, .d2 { fill: none; stroke: #dedede; stroke-width: 1.3; }
.s2, .t2, .y2, .g2, .d2 { stroke-width: 2; }
.t1, .t2 { stroke: #35b8a8; } .y1, .y2 { stroke: #e2a02b; } .g2 { stroke: #999; } .k1 { stroke: #282828; } .d1, .d2 { stroke: #292929; }
.o { fill: #ddd; stroke: #263b57; }
.w3 { fill: none; stroke: #263b57; stroke-width: 3; }

.app { position: relative; display: flex; flex-direction: column; min-height: 100vh; overflow: hidden; }
.titlebar { display: flex; justify-content: space-between; align-items: center; height: 20px; background: #fff; color: #222; }
.titlebar .winbtns { padding-right: 12px; }
.winbtns { display: flex; }
.winbtns button { width: 41px; height: 20px; display: grid; place-items: center; }
.winbtns svg { width: 12px; height: 12px; fill: none; stroke: #222; }

.menubar { display: flex; height: 20px; background: linear-gradient(#424242, #505050); border-bottom: 1px solid #292929; }
.menus { flex: 1; display: flex; gap: 25px; padding-left: 18px; }
.menus button { white-space: nowrap; }
.account { display: flex; align-items: center; width: 105px; padding-left: 2px; background: #d8d8dc; color: #303030; position: relative; }
.account .ic { width: 14px; height: 15px; flex: none; margin-right: 3px; }
.account::after, .drop::after, .explorer::after { content: ""; position: absolute; right: 5px; top: 50%; margin-top: -2px; border: 3px solid transparent; border-top: 4px solid #ddd; border-bottom: 0; pointer-events: none; }
.account::after { border-top-color: #111; }
.account select { font-size: 11px; }
.workspace { display: flex; align-items: center; padding-left: 9px; }
.workspace span { width: 57px; }
.workspace select { width: 91px; height: 18px; padding-left: 5px; background: #595959; color: #bbb; }

.toolbar { display: flex; align-items: center; height: 22px; background: #444; }
.tb { flex: none; width: 20px; height: 20px; display: grid; place-items: center; position: relative; }
.tb svg { width: 17px; height: 17px; color: #ddd; }
.tb.on { background: #5582c0; box-shadow: inset 0 0 0 1px #739bd0; }
.tb.on.dim { background: #465b7c; box-shadow: none; }
.tb.edge { width: 17px; }
.fly::after { content: ""; position: absolute; right: 0; bottom: 1px; border: 2px solid #ddd; border-top-color: transparent; border-left-color: transparent; }
.sep { flex: none; width: 6px; height: 14px; background: linear-gradient(#222, #222) center / 1px 100% no-repeat; }
.sep.light { background-image: linear-gradient(#888, #888); height: 18px; }
.grip { flex: none; width: 8px; height: 16px; background: radial-gradient(#777 1px, transparent 1px) center / 4px 2px; }
.drop { position: relative; display: flex; height: 16px; background: #626262; flex: none; }
.drop select { padding-left: 4px; color: #ccc; }
.toolbar .drop { margin: 0 1px; }
.w-s { width: 58px; } .w-m { width: 101px; } .w-l { width: 184px; }
.w-m select, .w-l select { font-family: Lato, sans-serif; }
.toolbar .w-m::after, .toolbar .w-l::after { right: 3px; }
.toolbar .w-l select { padding-left: 3px; }

.work { flex: 1; display: grid; grid-template-columns: 8px minmax(0, 1fr) 152px; min-height: 566px; padding: 2px 0; }
.rail { border-right: 3px solid #404040; background: linear-gradient(#292929 92%, #526476 92%, #2b568f 98%, #3a82d0 98%); }
.views { display: grid; grid-template: minmax(0, 278fr) minmax(0, 280fr) / minmax(0, 557fr) minmax(0, 556fr); gap: 4px; padding-right: 3px; }
.view { position: relative; min-height: 0; background: #343434; overflow: hidden; border-bottom: 1px solid #2c2c2c; }
.view > svg { width: 100%; height: 0; min-height: 100%; }
.view.persp { background: linear-gradient(#1c1c1c, #343434 45%, #4a4a4a); border: 2px solid #796824; margin-top: -1px; margin-left: -1px; }
.vlabel { position: absolute; left: 4px; top: 4px; display: flex; gap: 3px; color: #ccc; white-space: nowrap; }
.grid { fill: none; stroke: #636363; stroke-width: 1; }
.axis { stroke: #111; stroke-width: 1.5; }
.ink { fill: none; stroke: #3b3b3b; stroke-width: 1.2; }
.mesh { fill: none; stroke: #777; stroke-width: .7; } .mesh.dark { stroke: #333; }
.hand { font: 17px "Open Sans", sans-serif; fill: #444; } .hand .sm { font-size: 14px; } .hand .lg { font-size: 20px; }
.ax { font-size: 9px; font-weight: bold; } .tiny { font-size: 7px; fill: #555; font-weight: bold; } .compass { font-size: 10px; fill: #999; }

.panel { display: flex; flex-direction: column; border-left: 1px solid #353535; padding-left: 4px; overflow: hidden; background: #444; }
.tabs { display: flex; flex: none; height: 30px; border-top: 2px dotted #777; padding-top: 2px; background: #3b3b3b; overflow: hidden; margin-left: -4px; }
.tabs button { flex: none; width: 28px; display: grid; place-items: center; border-right: 1px solid #333; }
.tabs .cur { background: #444; } .tabs .ic { width: 16px; height: 16px; }
.objname { height: 16px; margin-top: 6px; background: #575757; flex: none; }
.modlist { height: 17px; margin-top: 8px; background: #606060; padding-left: 2px; flex: none; font-family: Lato, sans-serif; }
.stack { height: 112px; flex: none; margin-top: 4px; border: 2px solid #ccc; border-right: 0; }
.stacktools { display: flex; align-items: center; height: 30px; gap: 3px; }
.rollsplit { height: 22px; display: grid; place-items: center; background: linear-gradient(#606060, #606060) center / 100% 1px no-repeat; padding-left: 24px; }
.rollsplit i { width: 12px; height: 3px; background: repeating-linear-gradient(90deg, #aaa 0 1px, #555 1px 3px); }

.slider { display: flex; align-items: center; gap: 2px; height: 20px; padding-bottom: 2px; }
.frame { width: 99px; height: 14px; line-height: 14px; background: #616161; padding-right: 8px; }
.step { width: 12px; height: 13px; line-height: 12px; background: #626262; }
.ruler { height: 23px; background: #272727; border-top: 1px solid #151515; border-right: 12px solid #3a3a3a; border-left: 22px solid #444; padding: 0 6px 0 4px; }
.track { display: grid; grid-template-columns: repeat(100, minmax(0, 1fr)) 0; height: 22px; }
.track i { position: relative; font-style: normal; border-left: 1px solid #6c6c6c; height: 10px; }
.track i.major { height: 22px; border-color: #707070; }
.track span { position: absolute; bottom: 0; left: -11px; width: 20px; text-align: center; line-height: 12px; color: #bbb; }
.track .now::before { content: ""; position: absolute; left: -4px; top: 1px; width: 7px; height: 20px; background: #918b25; }
.track .now span { color: #eeee52; }

.status { display: flex; height: 49px; padding: 5px 0; border-bottom: 1px solid #606060; overflow: hidden; }
.line { display: flex; align-items: center; height: 20px; }
.listener { display: flex; flex-direction: column; width: 60px; padding-right: 1px; border-right: 1px solid #222; }
.listener input { background: #fff; height: 19px; width: 58px; }
.listener input:first-child { background: #dcc4c7; border-bottom: 2px solid #999; height: 20px; }
.messages { flex: 1; padding: 3px 7px; white-space: nowrap; min-width: 0; font-family: Lato, sans-serif; }
.messages p + p { margin-top: 8px; }
.coords { width: 387px; }
.coords .line:first-child .tb { margin-right: 4px; }
.coords label { display: flex; align-items: center; margin-right: 11px; white-space: nowrap; }
.coords label span { width: 12px; }
.coords label input { width: 50px; height: 14px; background: #595959; }
.coords .tag { margin-left: 270px; gap: 3px; font-family: Lato, sans-serif; }
.gridsize { white-space: nowrap; }
.tag .tb { width: 19px; height: 18px; }
.transport { width: 117px; }
.transport .line:first-child { gap: 1px; }
.spin { position: relative; width: 58px; height: 16px; background: #636363; margin: 0 4px; }
.spin input { width: 100%; height: 16px; padding-left: 4px; }
.spin::before, .spin::after { content: ""; position: absolute; right: 2px; top: 4px; border: 2px solid transparent; border-bottom: 3px solid #ddd; border-top: 0; }
.spin::after { top: 9px; border-bottom: 0; border-top: 3px solid #ddd; }
.bigkey { width: 37px; height: 38px; background: #646464; flex: none; display: grid; place-items: center; border-radius: 2px; }
.bigkey svg { width: 34px; height: 34px; }
.keys { display: grid; grid-template-rows: 18px 18px; gap: 2px; width: 40px; margin: 1px 5px 0 4px; }
.keys button, .kf { background: #606060; white-space: nowrap; border-radius: 2px; }
.filters { width: 100px; }
.filters .drop { height: 18px; margin-bottom: 2px; }
.filters .kf { height: 18px; flex: 1; margin-left: 3px; }
.navs { width: 58px; margin-left: 8px; display: grid; grid-template-columns: repeat(3, 20px); align-content: start; }

.dialog { position: absolute; left: 228px; top: 178px; width: 465px; height: 330px; display: flex; flex-direction: column; background: #444; border: 1px solid #626262; border-top: 0; box-shadow: 0 2px 9px #000a; }
.dtitle { display: flex; align-items: center; height: 22px; background: #fff; color: #222; padding: 0 1px 0 3px; flex: none; margin: 0 -1px; font: 11px/14px Lato, sans-serif; }
.dtitle .ic { width: 14px; height: 14px; margin-right: 4px; } .dtitle h2 { flex: 1; }
.dmenu { display: flex; gap: 16px; padding: 0 12px; height: 21px; font: 11px/14px Roboto, sans-serif; font-size: 10px; gap: 19px; }
.dtools { display: flex; align-items: center; height: 25px; padding-left: 2px; }
.dtools input { width: 131px; height: 20px; border: 1px solid #606060; }
.dtools .tb + .tb { margin-left: 1px; } .dtools .wide { width: 22px; }
.dbody { flex: 1; display: flex; min-height: 0; }
.kinds { width: 20px; display: flex; flex-direction: column; gap: 2px; padding-top: 2px; border-right: 1px solid #383838; }
.kinds button { width: 18px; height: 18px; display: grid; place-items: center; background: #5280c1; flex: none; }
.kinds svg { width: 17px; height: 17px; } .kinds span { color: #4e4b78; text-align: center; line-height: 10px; }
.tablewrap { flex: 1; padding: 0 1px 0 2px; font-family: Lato, sans-serif; }
table { width: 100%; border-collapse: collapse; table-layout: fixed; }
.c1 { width: 31px; } .c2 { width: 29px; } .c3 { width: 44px; }
th, td { padding: 0; border-right: 1px solid #555; font-weight: normal; text-align: left; }
th { height: 16px; border-bottom: 1px solid #555; border-top: 1px solid #565656; }
th + th { padding-left: 2px; white-space: nowrap; }
td { height: 16px; } td svg { width: 13px; height: 12px; margin: auto; color: #303030; }
td .pot { width: 16px; height: 15px; }
.sort { display: flex; justify-content: space-between; align-items: center; }
.sort i { border: 3px solid transparent; border-bottom: 6px solid #eee; border-top: 0; margin-right: 2px; }
.r0 td, .r1 td { background: #505050; border-color: #505050; } .r2 td { background: #5783bd; border-color: #426b9f; }
.r0 td:first-child, .r1 td:first-child, .r2 td:first-child { background: #444; }
.node { display: flex; align-items: center; height: 16px; padding-left: 3px; }
.node svg { margin: 0 1px 0 0; flex: none; } .node span { flex: 1; height: 16px; line-height: 16px; padding-left: 2px; background: #505050; }
.node i { width: 10px; margin-right: 2px; }
.closed::before, .open::before { content: ""; display: block; width: 0; border: 5px solid transparent; border-left: 6px solid #fff; border-right: 0; margin-left: 2px; }
.open::before { border: 5px solid transparent; border-top: 6px solid #fff; border-bottom: 0; margin-left: 0; }
.child { padding-left: 31px; } .child svg { margin: 0; } .child svg + svg { margin-right: 1px; }
.r1 .node span { background: linear-gradient(90deg, #3d51a0, #505050); } .r2 .node span { background: #5783bd; color: #eef; }
.dfoot { display: flex; align-items: center; height: 23px; padding-left: 3px; flex: none; }
.explorer { position: relative; width: 138px; height: 19px; color: #e0df30; display: flex; }
.explorer::after { border-top-color: #111; right: 3px; }
.explorer select { width: 126px; border: 1px solid #5f5f5f; padding-left: 1px; }
.dfoot label { padding: 0 5px 0 2px; white-space: nowrap; }
.dfoot .sset { width: 104px; height: 18px; margin-right: 3px; }
.dfoot > .tb + .tb { margin-left: 1px; }
.pointer { position: absolute; left: 126px; top: 168px; width: 30px; height: 30px; }
```
